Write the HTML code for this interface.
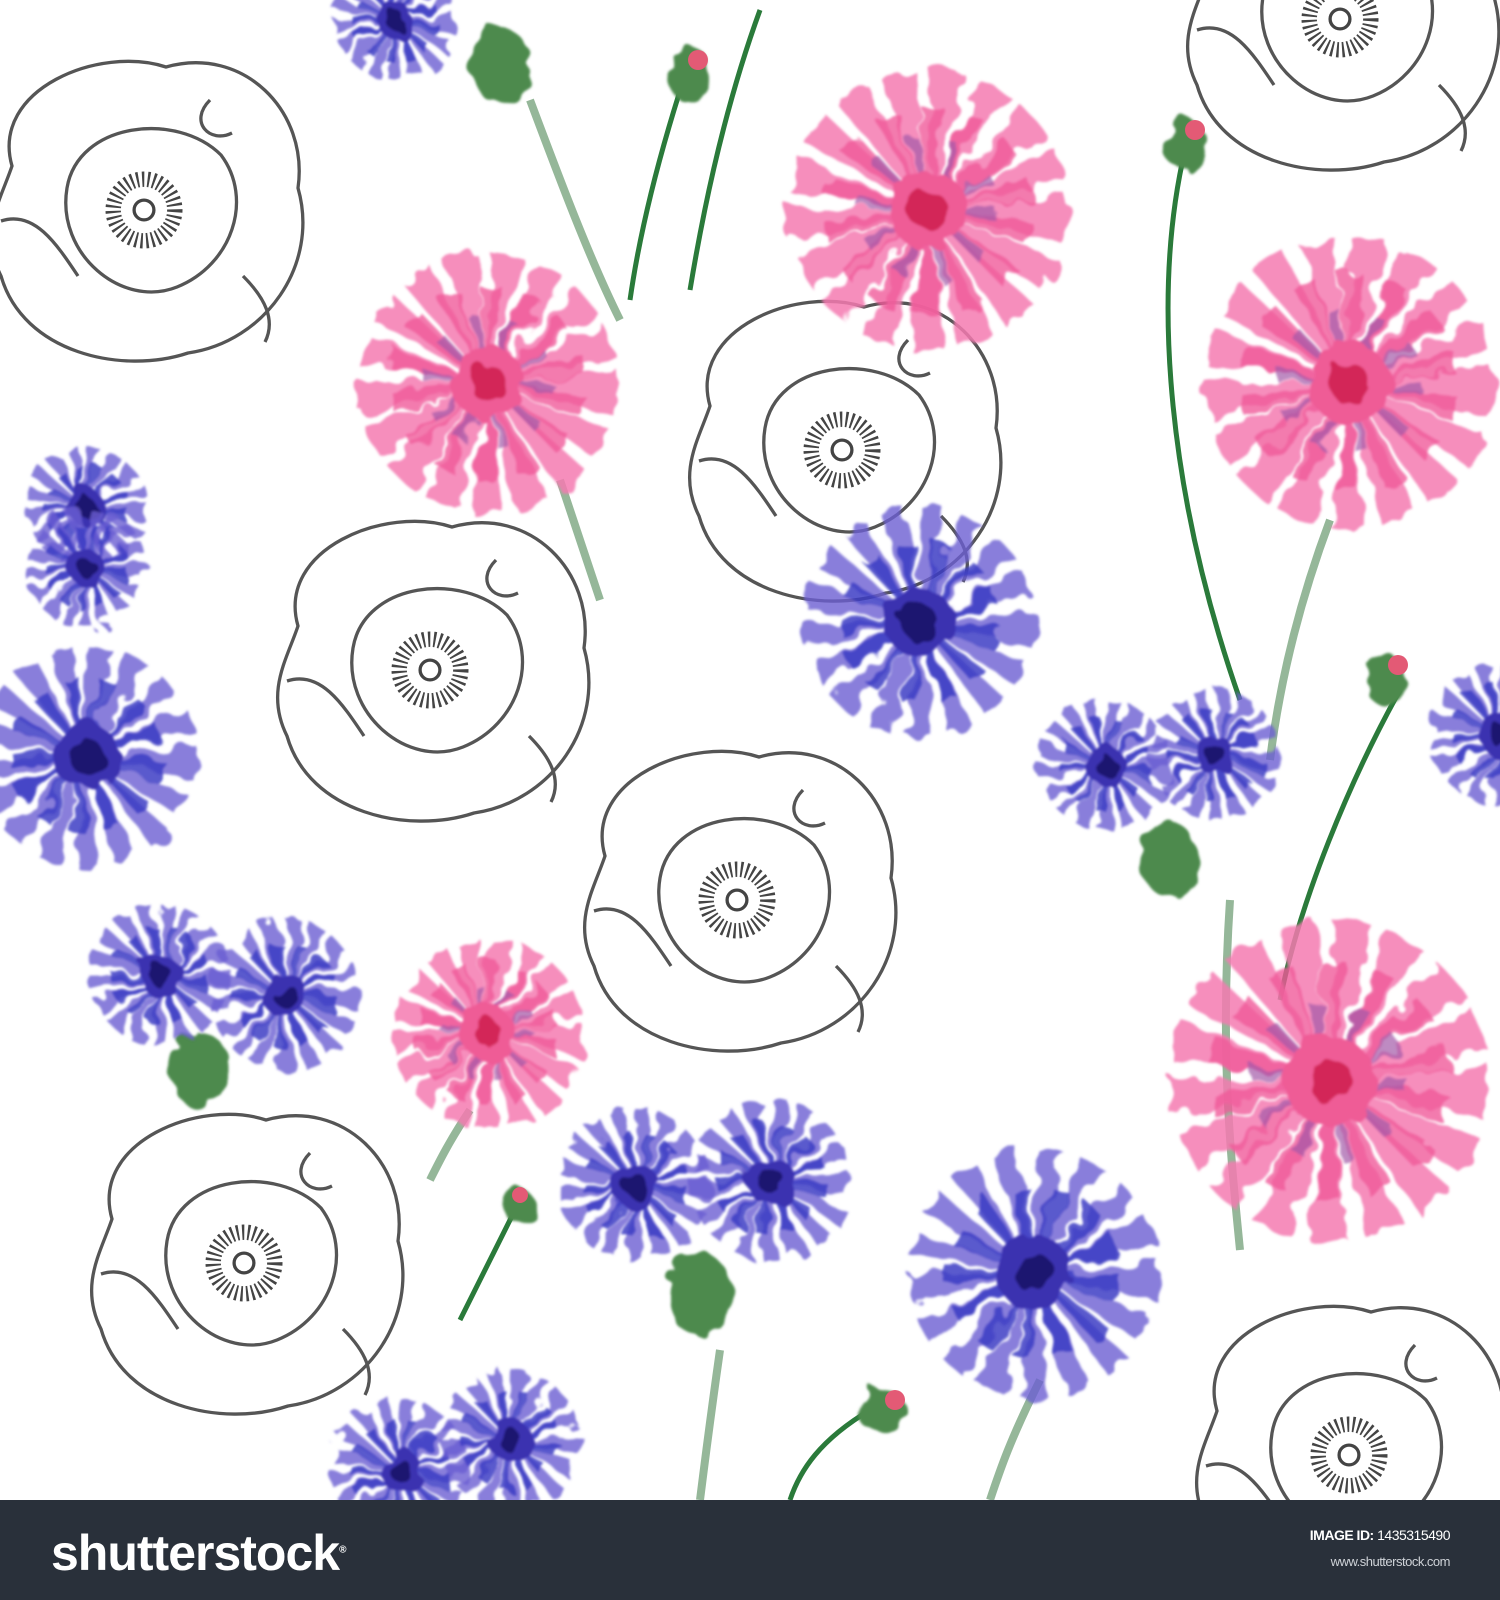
<!DOCTYPE html>
<html><head><meta charset="utf-8"><style>
html,body{margin:0;padding:0;width:1500px;height:1600px;overflow:hidden;background:#fff}
.bar{position:absolute;left:0;top:1500px;width:1500px;height:100px;background:#29303a}
.logo{position:absolute;left:51px;top:24px;color:#fff;font:bold 50px "Liberation Sans",sans-serif;letter-spacing:-1px}
.logo sup{font-size:10px}
.id{position:absolute;right:50px;top:27px;color:#fff;font:14px "Liberation Sans",sans-serif;text-align:right;letter-spacing:-0.5px}
.url{position:absolute;right:50px;top:54px;color:#cfd3d8;font:13px "Liberation Sans",sans-serif;letter-spacing:-0.5px}
</style></head><body>
<svg width="1500" height="1500" style="position:absolute;left:0;top:0">
<defs>
<filter id="wc" x="-20%" y="-20%" width="140%" height="140%">
<feTurbulence type="fractalNoise" baseFrequency="0.04" numOctaves="2" seed="3"/>
<feDisplacementMap in="SourceGraphic" scale="22"/>
<feGaussianBlur stdDeviation="1.2"/>
</filter>
<symbol id="pink" viewBox="-100 -100 200 200" overflow="visible">
<circle r="55" fill="none" stroke="#f47ab0" stroke-width="90" stroke-dasharray="14 6" opacity=".85"/>
<circle r="40" fill="none" stroke="#f05a9a" stroke-width="70" stroke-dasharray="9 9" transform="rotate(7)" opacity=".8"/>
<circle r="30" fill="none" stroke="#a25aa8" stroke-width="40" stroke-dasharray="5 14" opacity=".7"/>
<circle r="28" fill="#ef5b96"/>
<circle r="14" fill="#c8123f" opacity=".7"/>
</symbol>
<symbol id="blue" viewBox="-100 -100 200 200" overflow="visible">
<circle r="55" fill="none" stroke="#6a5ed2" stroke-width="90" stroke-dasharray="12 8" opacity=".8"/>
<circle r="38" fill="none" stroke="#3d3cc4" stroke-width="65" stroke-dasharray="8 10" transform="rotate(9)" opacity=".85"/>
<circle r="30" fill="#3a32b0"/>
<circle r="16" fill="#1e1870"/>
</symbol>
<symbol id="poppy" viewBox="-150 -150 300 300" overflow="visible">
<path d="M-120,-40 C-140,-110 -40,-150 20,-130 C90,-150 150,-90 140,-20 C160,50 110,120 40,130 C-20,150 -110,130 -130,60 C-150,20 -130,-10 -120,-40Z" fill="#fff" stroke="#555" stroke-width="3"/>
<path d="M-70,-20 C-60,-80 30,-90 70,-50 C100,-10 80,50 30,70 C-20,90 -80,40 -70,-20Z" fill="none" stroke="#555" stroke-width="3"/>
<path d="M-130,10 C-100,0 -80,30 -60,60 M60,-100 C40,-80 60,-60 80,-70 M90,60 C110,80 120,100 110,120" fill="none" stroke="#555" stroke-width="3"/>
<circle r="28" fill="none" stroke="#444" stroke-width="14" stroke-dasharray="2 3"/>
<circle r="9" fill="none" stroke="#444" stroke-width="3"/>
</symbol>
</defs>
<g stroke="#2a7a3a" stroke-width="5" fill="none">
<path d="M690,60 C660,150 640,230 630,300"/><path d="M760,10 C720,120 700,230 690,290"/>
<path d="M1185,150 C1150,300 1170,500 1240,700"/><path d="M1400,690 C1350,780 1300,900 1280,1000"/>
<path d="M870,1410 C820,1440 800,1470 790,1500"/><path d="M520,1200 C490,1260 470,1300 460,1320"/>
</g>
<g stroke="#7aa57f" stroke-width="8" fill="none" opacity=".8">
<path d="M530,100 C560,180 590,260 620,320"/><path d="M560,480 C580,540 590,570 600,600"/>
<path d="M1330,520 C1300,600 1280,680 1270,760"/><path d="M1230,900 C1220,1050 1230,1150 1240,1250"/>
<path d="M720,1350 C710,1420 705,1460 700,1500"/><path d="M1040,1380 C1010,1440 1000,1470 990,1500"/>
<path d="M470,1110 C450,1140 440,1160 430,1180"/>
</g>
<use href="#poppy" x="-21" y="45" width="330" height="330"/>
<use href="#poppy" x="265" y="505" width="330" height="330"/>
<use href="#poppy" x="677" y="285" width="330" height="330"/>
<use href="#poppy" x="572" y="735" width="330" height="330"/>
<use href="#poppy" x="79" y="1098" width="330" height="330"/>
<use href="#poppy" x="1184" y="1290" width="330" height="330"/>
<use href="#poppy" x="1175" y="-146" width="330" height="330"/>
<g fill="#4e8a4e" filter="url(#wc)"><ellipse cx="690" cy="75" rx="22" ry="28"/><ellipse cx="1185" cy="145" rx="20" ry="26"/><ellipse cx="1385" cy="680" rx="20" ry="26"/><ellipse cx="880" cy="1410" rx="25" ry="20"/><ellipse cx="518" cy="1205" rx="15" ry="18"/><ellipse cx="500" cy="65" rx="30" ry="38"/><ellipse cx="200" cy="1070" rx="30" ry="38"/><ellipse cx="700" cy="1295" rx="32" ry="42"/><ellipse cx="1170" cy="860" rx="28" ry="38"/></g>
<g fill="#e35a75"><circle cx="698" cy="60" r="10"/><circle cx="1195" cy="130" r="10"/><circle cx="1398" cy="665" r="10"/><circle cx="895" cy="1400" r="10"/><circle cx="520" cy="1195" r="8"/></g>
<g filter="url(#wc)">
<use href="#pink" x="788" y="70" width="280" height="280"/>
<use href="#pink" x="358" y="253" width="260" height="260"/>
<use href="#pink" x="1204" y="238" width="290" height="290"/>
<use href="#pink" x="1170" y="921" width="320" height="320"/>
<use href="#pink" x="393" y="938" width="190" height="190"/>
<use href="#blue" x="804" y="507" width="230" height="230"/>
<use href="#blue" x="-24" y="646" width="220" height="220"/>
<use href="#blue" x="909" y="1148" width="250" height="250"/>
<use href="#blue" x="26" y="447" width="120" height="120"/>
<use href="#blue" x="26" y="507" width="120" height="120"/>
<use href="#blue" x="90" y="905" width="140" height="140"/>
<use href="#blue" x="210" y="920" width="150" height="150"/>
<use href="#blue" x="560" y="1110" width="150" height="150"/>
<use href="#blue" x="690" y="1100" width="160" height="160"/>
<use href="#blue" x="1040" y="700" width="130" height="130"/>
<use href="#blue" x="1150" y="690" width="130" height="130"/>
<use href="#blue" x="330" y="1400" width="140" height="140"/>
<use href="#blue" x="440" y="1370" width="140" height="140"/>
<use href="#blue" x="320" y="-40" width="150" height="120"/>
<use href="#blue" x="1430" y="660" width="140" height="150"/>
</g>
</svg>
<div class="bar">
<div class="logo">shutterstock<sup>®</sup></div>
<div class="id"><b>IMAGE ID:</b> 1435315490</div>
<div class="url">www.shutterstock.com</div>
</div>
</body></html>
